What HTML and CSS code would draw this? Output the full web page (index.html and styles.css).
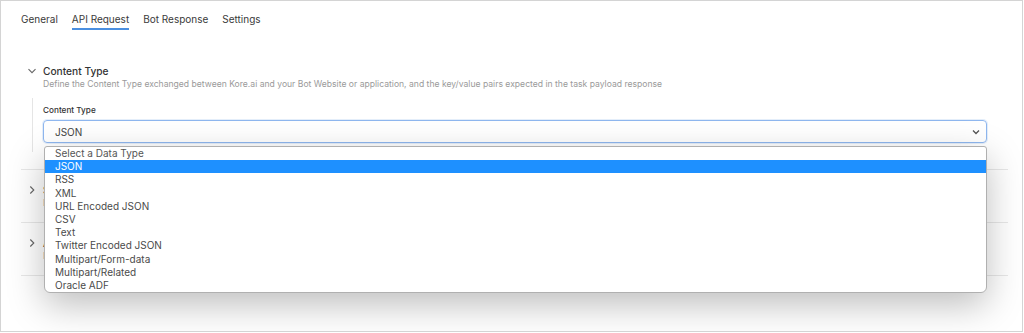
FILE: index.html
```html
<!DOCTYPE html>
<html>
<head>
<meta charset="utf-8">
<link rel="stylesheet" href="styles.css">
</head>
<body>
<div class="frame">
  <nav class="tabs">
    <span class="tab">General</span>
    <span class="tab active">API Request</span>
    <span class="tab">Bot Response</span>
    <span class="tab">Settings</span>
  </nav>
  <div class="sections">
    <section class="sec open">
      <div class="sec-head">
        <svg class="chev" viewBox="0 0 10 10"><path d="M1.5 3.2 L5 6.7 L8.5 3.2" fill="none" stroke="#666" stroke-width="1.1"/></svg>
        <div class="sec-text">
          <div class="sec-title">Content Type</div>
          <div class="sec-desc">Define the Content Type exchanged between Kore.ai and your Bot Website or application, and the key/value pairs expected in the task payload response</div>
        </div>
      </div>
      <div class="sec-body">
        <div class="field-label">Content Type</div>
        <div class="select">
          <span>JSON</span>
          <svg class="sel-chev" viewBox="0 0 10 10"><path d="M2 3.5 L5 6.5 L8 3.5" fill="none" stroke="#555" stroke-width="1.3"/></svg>
        </div>
      </div>
    </section>
    <section class="sec">
      <div class="sec-head">
        <svg class="chev" viewBox="0 0 10 10"><path d="M3.3 1.5 L6.8 5 L3.3 8.5" fill="none" stroke="#666" stroke-width="1.1"/></svg>
        <div class="sec-text">
          <div class="sec-title">Sample Response</div>
          <div class="sec-desc">Define the sample response for the request</div>
        </div>
      </div>
    </section>
    <section class="sec">
      <div class="sec-head">
        <svg class="chev" viewBox="0 0 10 10"><path d="M3.3 1.5 L6.8 5 L3.3 8.5" fill="none" stroke="#666" stroke-width="1.1"/></svg>
        <div class="sec-text">
          <div class="sec-title">Authentication</div>
          <div class="sec-desc">Initialize authentication for the request</div>
        </div>
      </div>
    </section>
  </div>
  <ul class="dropdown">
    <li class="placeholder">Select a Data Type</li>
    <li class="selected">JSON</li>
    <li>RSS</li>
    <li>XML</li>
    <li>URL Encoded JSON</li>
    <li>CSV</li>
    <li>Text</li>
    <li>Twitter Encoded JSON</li>
    <li>Multipart/Form-data</li>
    <li>Multipart/Related</li>
    <li>Oracle ADF</li>
  </ul>
</div>
</body>
</html>
```
FILE: styles.css
```css
* { box-sizing: border-box; }
html, body { margin: 0; padding: 0; background: #fff; }
body { font-family: Inter, "Noto Sans", sans-serif; color: #333; }

.frame {
  position: relative;
  width: 1023px;
  height: 332px;
  border: 1px solid #d4d4d4;
  overflow: hidden;
  background: #fff;
}

.tabs {
  display: flex;
  gap: 14px;
  padding: 11px 0 0 20px;
  font-size: 10px;
}
.tab {
  line-height: 14px;
  padding-bottom: 2px;
  border-bottom: 2px solid transparent;
  color: #3a3a3a;
}
.tab.active { border-bottom-color: #4a8fe0; }

.sections {
  margin: 21px 14px 0 20px;
}
.sec {
  border-bottom: 1px solid #e8e8e8;
  padding: 13px 0 12px;
}
.sec-head {
  display: flex;
  align-items: flex-start;
  gap: 6px;
  padding-left: 6px;
}
.chev { width: 10px; height: 10px; margin-top: 2px; flex: none; }
.sec-title { font-size: 10.2px; font-weight: 500; color: #333; line-height: 14px; }
.sec-desc { font-size: 8.6px; color: #9a9a9a; line-height: 13px; }

.sec-body {
  margin: 7px 21px 5px 11px;
  border-left: 1px solid #e5e5e5;
  padding: 6px 0 9px 10px;
}
.field-label { font-size: 8.2px; font-weight: 500; color: #333; line-height: 12px; margin-bottom: 4px; }
.select {
  height: 23px;
  border: 1px solid #8fb7ef;
  border-radius: 4px;
  box-shadow: 0 0 0 1px rgba(74,143,224,0.15);
  display: flex;
  align-items: center;
  justify-content: space-between;
  padding: 0 5px 0 11px;
  font-size: 10px;
  color: #444;
}
.sel-chev { width: 10px; height: 10px; }

.dropdown {
  position: absolute;
  left: 43px;
  top: 145px;
  width: 943px;
  margin: 0;
  padding: 0;
  list-style: none;
  background: #fff;
  border: 1px solid #b0b0b0;
  border-radius: 3px 3px 6px 6px;
  box-shadow: 0 12px 36px rgba(0,0,0,0.26);
}
.dropdown li {
  font-size: 10px;
  line-height: 13.2px;
  padding-left: 10px;
  color: #4a4a4a;
}
.dropdown li.placeholder { color: #555; }
.dropdown li.selected { background: #1e90ff; color: #fff; }
```
